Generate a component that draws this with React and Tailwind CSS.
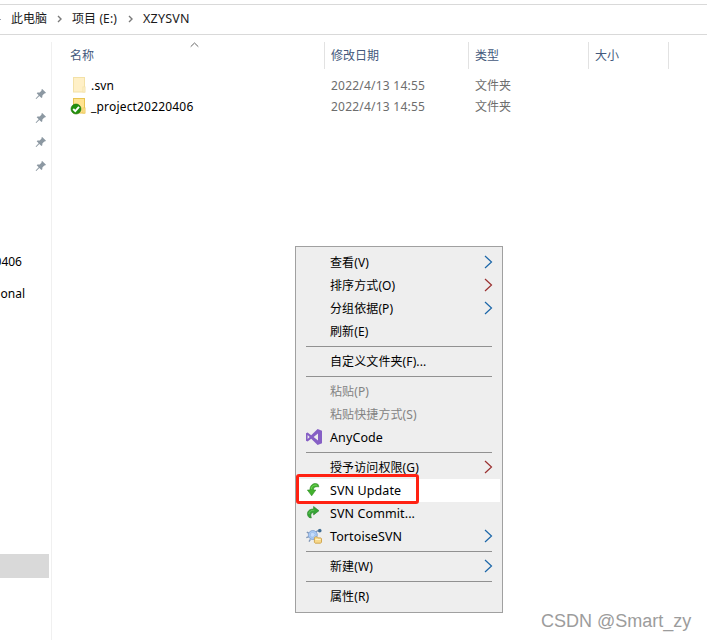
import clsx from 'clsx';

const Pin = () => (
  <svg width="12" height="12" viewBox="0 0 12 12" className="block" fill="#8c98a2">
    <path d="M7.2 1 11 4.7 10 5.6 9.3 5.4 7.4 7.4 7.3 9.3 6.5 10 4.3 7.9 1.3 11 .6 10.6 3.7 7.3 1.7 5.2 2.5 4.5 4.7 4.4 6.6 2.5 6.4 1.7Z" />
  </svg>
);

const Folder = ({ faded, checked }) => (
  <svg width="18" height="18" viewBox="0 0 18 18" className="block">
    <g opacity={faded ? 0.5 : 1}>
      <rect x="3" y="0" width="12" height="15.5" fill="#e8c452" />
      <rect x="4" y="1" width="10" height="13.5" fill="#ffe391" />
      <path d="M12.5 9.5h3v6h-3z" fill="#efc85a" />
      <path d="M13.3 10.3h1.3v4.5h-1.3z" fill="#fbe195" />
    </g>
    {checked && (
      <>
        <circle cx="6" cy="11" r="5" fill="#23900f" stroke="#157006" strokeWidth=".6" />
        <path d="M3.2 11 5.3 13.2 9 8.8" fill="none" stroke="#fff" strokeWidth="1.9" />
      </>
    )}
  </svg>
);

const VisualStudio = () => (
  <svg width="16" height="16" viewBox="0 0 16 16" fill="#865fc5" className="mb-px block">
    <path
      fillRule="evenodd"
      d="M11.6 0 16 1.8V14.2L11.6 16 5.2 9.8 1.6 12.5 0 11.7V4.3L1.6 3.5 5.2 6.2ZM12 4.6 7.6 8 12 11.4ZM1.6 5.9V10.1L3.7 8Z"
    />
  </svg>
);

const UpdateArrow = () => (
  <svg width="16" height="16" viewBox="0 0 16 16" className="mb-px block">
    <path d="M12.8 4.9 12.2 2.6C9.4.2 4 1.6 3.9 8H1.4L5.7 13.8 9.8 8H7.5C7.3 5.6 9 4.3 12.8 4.9Z" fill="#42b22e" stroke="#2c8a22" strokeWidth=".6" />
    <path d="M5.2 7C5.8 3.6 8.4 2.7 10.8 3.3" fill="none" stroke="#7ad862" strokeWidth=".9" />
  </svg>
);

const CommitArrow = () => (
  <svg width="16" height="16" viewBox="0 0 16 16" className="mb-px block">
    <path d="M7.6 1.5 13 5.7 7.6 9.9V7.6C4.9 7.6 4.4 9.4 5.3 13L3 12.4C.2 9.6.9 4 7.6 4Z" fill="#35a535" stroke="#277d27" strokeWidth=".6" />
    <path d="M2.9 9C3.2 6 5.2 5.2 8.3 5.2" fill="none" stroke="#68c95c" strokeWidth=".9" />
  </svg>
);

const Tortoise = () => (
  <svg width="16" height="16" viewBox="0 0 16 16" className="mb-px block">
    <path d="M.8 4.2 3.2 5.4M.3 9.6 3 8.6M3 13.6 4.4 11.3M10 3.8 12.5 2.4" stroke="#7f95b5" strokeWidth="1.3" />
    <circle cx="6.8" cy="7" r="4.5" fill="#a9caf5" stroke="#7e9dcb" strokeWidth=".8" />
    <path d="M4.6 5 7.2 4.2 9.2 6.6 7.2 9.3 4.3 8.5Z" fill="#c4dcfb" stroke="#93b3de" strokeWidth=".5" />
    <path d="M12.4 1.2 14.2.7 15.6 2.1 15.2 4.1 13.3 4.5 12 3.4Z" fill="#3f6d94" />
    <path d="M8.4 9.8 9.2 8.9H11.2l.9 1h2.7l.7.8v3.5l-.9 1H9.2l-.8-.9Z" fill="#f7d88a" stroke="#c99a3c" strokeWidth=".8" />
    <path d="M9.4 11.5h5.2" stroke="#fff3c4" strokeWidth="1.1" />
  </svg>
);

const Crumb = ({ className }) => (
  <svg width="5" height="8" viewBox="0 0 5 8" className={className}>
    <path d="M1 1 4 4 1 7" fill="none" stroke="#7a7a7a" strokeWidth="1.4" />
  </svg>
);

const menu = [
  { label: '查看(V)', arrow: '#1b66a8' },
  { label: '排序方式(O)', arrow: '#9a3030' },
  { label: '分组依据(P)', arrow: '#1b66a8' },
  { label: '刷新(E)' },
  null,
  { label: '自定义文件夹(F)...' },
  null,
  { label: '粘贴(P)', disabled: true },
  { label: '粘贴快捷方式(S)', disabled: true },
  { label: 'AnyCode', icon: <VisualStudio />, latin: true },
  null,
  { label: '授予访问权限(G)', arrow: '#9a3030' },
  { label: 'SVN Update', icon: <UpdateArrow />, latin: true, active: true },
  { label: 'SVN Commit...', icon: <CommitArrow />, latin: true },
  { label: 'TortoiseSVN', icon: <Tortoise />, latin: true, arrow: '#1b66a8' },
  null,
  { label: '新建(W)', arrow: '#1b66a8' },
  null,
  { label: '属性(R)' },
];

const files = [
  { name: '.svn', faded: true },
  { name: '_project20220406', checked: true },
];

const MenuItem = ({ item }) => (
  <div className={clsx('relative mr-px flex h-[23px] items-center pl-[9px]', item.active && 'bg-white')}>
    <span className="w-6 shrink-0">{item.icon}</span>
    <span
      className={clsx(
        'whitespace-nowrap leading-[23px]',
        item.latin ? 'text-[12.5px] tracking-[0.1px]' : 'text-[12px] tracking-[0.1px]',
        item.disabled ? 'text-[#838383]' : 'text-black'
      )}
    >
      {item.label}
    </span>
    {item.arrow && (
      <svg width="9" height="14" viewBox="0 0 9 14" className="mr-[7px] mb-px ml-auto">
        <path d="M1 1 7.5 7 1 13" fill="none" stroke={item.arrow} strokeWidth="1.2" />
      </svg>
    )}
    {item.active && (
      <div className="absolute top-[-5px] left-[-1px] h-[30px] w-[123px] rounded-[3px] border-3 border-[#ff2112]" />
    )}
  </div>
);

const App = () => {
  return (
    <div className="relative flex h-[640px] w-[707px] flex-col overflow-hidden bg-white pt-1 font-['Noto_Sans','Noto_Sans_CJK_SC',sans-serif] text-[12px] text-black">
      <div className="flex h-[31px] shrink-0 items-center border-y border-[#d9d9d9] pb-px text-[#1a1a1a]">
        <span className="h-px w-px bg-gray-400" />
        <span className="ml-[10px] w-[36px] whitespace-nowrap">此电脑</span>
        <Crumb className="ml-[10px]" />
        <span className="ml-[10px] w-[46px] tracking-[0.1px] whitespace-nowrap">项目 (E:)</span>
        <Crumb className="ml-[10px]" />
        <span className="ml-[10px] text-[12.5px] tracking-[0.2px]">XZYSVN</span>
      </div>

      <div className="flex flex-1">
        <div className="mt-[7px] flex w-[52px] shrink-0 flex-col border-r border-[#f0f0f0]">
          <div className="mt-[46px] ml-[35px] flex flex-col gap-3">
            <Pin />
            <Pin />
            <Pin />
            <Pin />
          </div>
          <div className="mt-[79px] flex w-[22px] justify-end leading-[22px]">0406</div>
          <div className="mt-[10px] flex w-[25px] justify-end leading-[22px]">onal</div>
          <div className="mt-[249px] h-6 w-[49px] bg-[#d9d9d9]" />
        </div>

        <div className="flex-1 pt-[7px]">
          <div className="flex h-[27px] leading-[27px] text-[#44597c]">
            <div className="relative w-[273px] border-r border-[#e2e2e2] pl-[18px]">
              名称
              <svg width="9" height="6" viewBox="0 0 9 6" className="absolute top-0 left-[138px]">
                <path d="M.7 4.7 4.5 1 8.3 4.7" fill="none" stroke="#666" strokeWidth="1" />
              </svg>
            </div>
            <div className="w-36 border-r border-[#e2e2e2] pl-[6px]">修改日期</div>
            <div className="w-[120px] border-r border-[#e2e2e2] pl-[6px]">类型</div>
            <div className="w-20 border-r border-[#e2e2e2] pl-[6px]">大小</div>
          </div>
          <div className="pt-[6px]">
            {files.map((file) => (
              <div key={file.name} className="flex h-[21px] items-center text-[#6d6d6d]">
                <div className="flex w-[279px] items-center pl-[18px] text-black">
                  <Folder faded={file.faded} checked={file.checked} />
                  <span className="ml-[3px] tracking-[0.18px]">{file.name}</span>
                </div>
                <div className="w-36 tracking-[0.22px]">2022/4/13 14:55</div>
                <div>文件夹</div>
              </div>
            ))}
          </div>
        </div>
      </div>

      <div className="absolute top-[246px] left-[295px] h-[367px] w-[208px] border border-[#a0a0a0] bg-[#eeeeee] py-1 pr-px pl-px">
        {menu.map((item, i) =>
          item ? (
            <MenuItem key={i} item={item} />
          ) : (
            <div key={i} className="mr-[9px] ml-[9px] flex h-[7px] items-center">
              <div className="h-px w-full bg-[#919191]" />
            </div>
          )
        )}
      </div>

      <div className="absolute top-[609px] left-[541px] font-['Liberation_Sans',sans-serif] text-[18px] leading-6 whitespace-nowrap text-[#9c9c9c]">
        CSDN @Smart_zy
      </div>
    </div>
  );
};

export default App;
